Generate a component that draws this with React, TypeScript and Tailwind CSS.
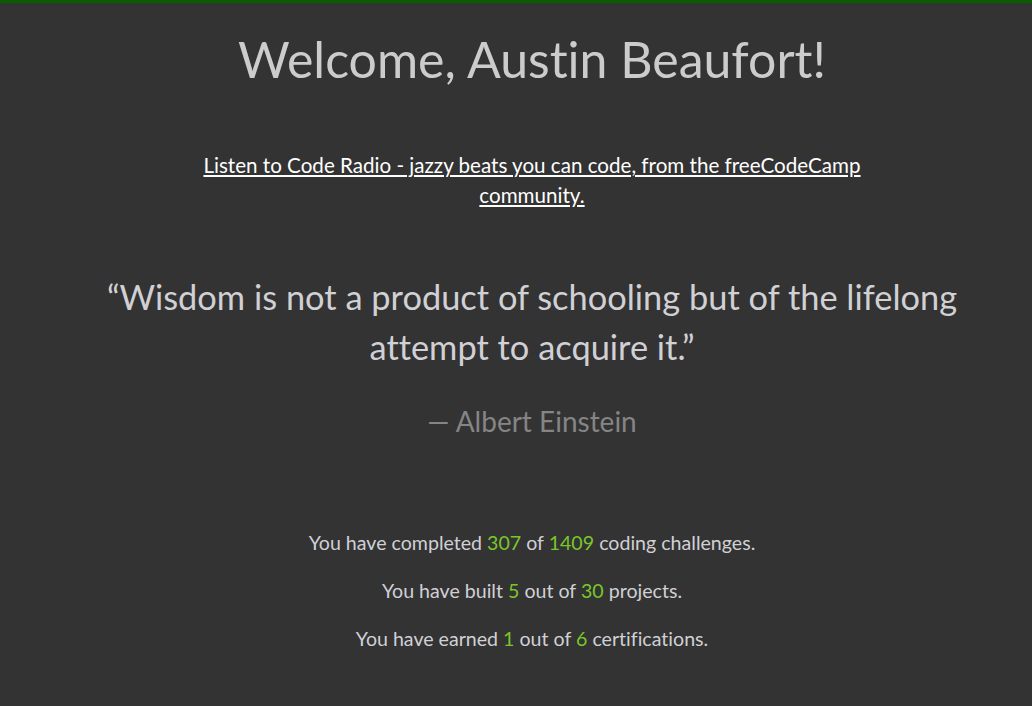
export default function App() {
  return (
    <div className="min-h-[706px] bg-[#333333] font-['Lato',sans-serif] [font-variant-ligatures:none]">
      <div className="h-[3px] bg-[#0a5c00]" />
      <main className="flex flex-col items-center pl-[32px] text-center">
        <h1 className="mt-[29px] text-[50px] leading-[1.1] text-[#cccccc]">Welcome, Austin Beaufort!</h1>
        <a href="#" className="mt-[63px] max-w-[690px] text-[20.6px] leading-[30px] text-white underline">
          Listen to Code Radio - jazzy beats you can code, from the freeCodeCamp community.
        </a>
        <blockquote className="mt-[62px] max-w-[900px] text-[34.4px] leading-[50px] text-[#d0d0d5]">
          “Wisdom is not a product of schooling but of the lifelong attempt to acquire it.”
        </blockquote>
        <p className="mt-[28px] text-[28px] text-[#858585]">— Albert Einstein</p>
        <div className="mt-[87px] flex flex-col gap-[20px] text-[19.6px] leading-[28px] text-[#d0d0d5]">
          <p>
            You have completed <span className="text-[#7ac62a]">307</span> of{' '}
            <span className="text-[#7ac62a]">1409</span> coding challenges.
          </p>
          <p>
            You have built <span className="text-[#7ac62a]">5</span> out of{' '}
            <span className="text-[#7ac62a]">30</span> projects.
          </p>
          <p>
            You have earned <span className="text-[#7ac62a]">1</span> out of{' '}
            <span className="text-[#7ac62a]">6</span> certifications.
          </p>
        </div>
      </main>
    </div>
  );
}
